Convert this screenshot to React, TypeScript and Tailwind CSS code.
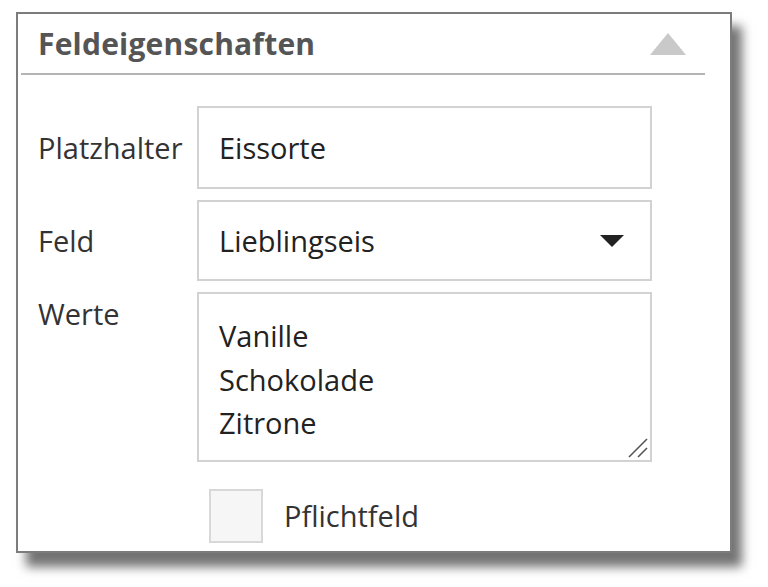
import React from "react";

function Label({ children, top }: { children: React.ReactNode; top?: boolean }) {
  return (
    <div
      className={`w-[159px] shrink-0 text-[29px] leading-[43.5px] text-[#333] ${top ? "self-start" : "self-center"}`}
    >
      {children}
    </div>
  );
}

export default function App() {
  return (
    <div className="min-h-screen bg-white pl-[16px] pt-[12px] font-['Open_Sans','Noto_Sans',sans-serif]">
      <div className="flex h-[541px] w-[716px] flex-col border-2 border-[#7c7c7c] bg-white shadow-[10px_14px_10px_rgba(0,0,0,0.55)]">
        {/* Header */}
        <div className="flex h-[59px] items-center justify-between pl-[20px] pr-[44px]">
          <h2 className="text-[30px] font-bold leading-none tracking-[0.2px] text-[#555]">Feldeigenschaften</h2>
          <svg width="36" height="22" viewBox="0 0 36 22">
            <polygon points="18,0 36,22 0,22" fill="#c9c9c9" />
          </svg>
        </div>
        <div className="ml-[3px] mr-[25px] h-[2px] bg-[#b4b4b4]" />

        {/* Fields */}
        <div className="flex flex-col gap-[11px] pl-[20px] pt-[31px]">
          <div className="flex">
            <Label>Platzhalter</Label>
            <div className="flex h-[83px] w-[455px] items-center border-2 border-[#d2d2d2] pl-[20px] text-[29px] leading-[43.5px] text-[#222]">
              Eissorte
            </div>
          </div>

          <div className="flex">
            <Label>Feld</Label>
            <div className="flex h-[81px] w-[455px] items-center justify-between border-2 border-[#d2d2d2] pl-[20px] pr-[26px] text-[29px] leading-[43.5px] text-[#222]">
              <span>Lieblingseis</span>
              <svg width="24" height="12" viewBox="0 0 24 12">
                <polygon points="0,0 24,0 12,12" fill="#222" />
              </svg>
            </div>
          </div>

          <div className="flex">
            <Label top>Werte</Label>
            <div className="relative h-[170px] w-[455px] border-2 border-[#d2d2d2] pl-[20px] pt-[20px] text-[29px] leading-[43.5px] text-[#222]">
              <div>Vanille</div>
              <div>Schokolade</div>
              <div>Zitrone</div>
              <svg className="absolute bottom-[2px] right-[2px]" width="20" height="20" viewBox="0 0 20 20">
                <line x1="19" y1="1" x2="1" y2="19" stroke="#555" strokeWidth="1.6" />
                <line x1="19" y1="10" x2="10" y2="19" stroke="#555" strokeWidth="1.6" />
              </svg>
            </div>
          </div>

          <div className="mt-[16px] flex items-center gap-[21px] pl-[171px]">
            <div className="h-[54px] w-[54px] border-2 border-[#d8d8d8] bg-[#f6f6f6]" />
            <span className="text-[29px] leading-[43.5px] text-[#333]">Pflichtfeld</span>
          </div>
        </div>
      </div>
    </div>
  );
}
